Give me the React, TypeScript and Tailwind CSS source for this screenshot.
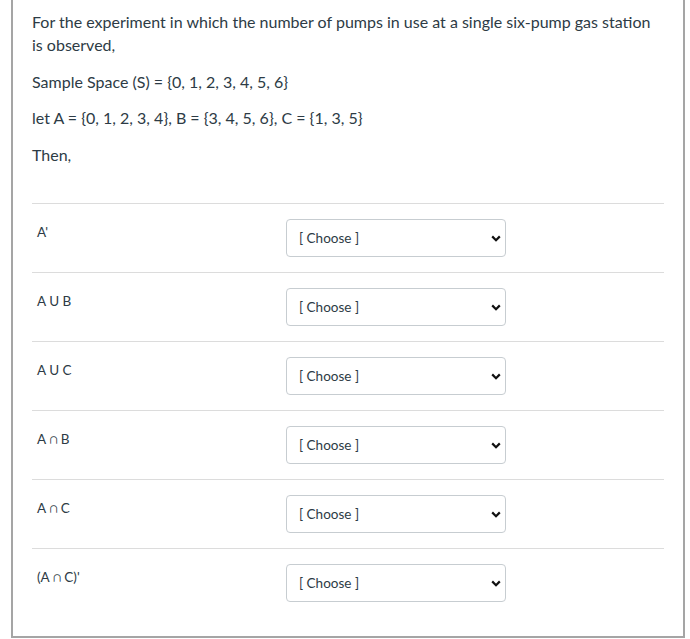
const rows = ["A'", "A U B", "A U C", "A ∩ B", "A ∩ C", "(A ∩ C)'"];

export default function App() {
  return (
    <div className="bg-white w-[690px] h-[639px] font-['Lato','Liberation_Sans',sans-serif] text-[#2d3b45]">
      <div className="ml-[11px] w-[674px] h-[638px] border-x-2 border-b-2 border-[#a5a5a5] pt-[10px] px-[19px]">
        <p className="text-[16px] leading-[23px]">
          For the experiment in which the number of pumps in use at a single six-pump gas station is observed,
        </p>
        <p className="mt-[14px] text-[16px] leading-[23px]">Sample Space (S) = {"{"}0, 1, 2, 3, 4, 5, 6{"}"}</p>
        <p className="mt-[13px] text-[16px] leading-[23px]">let A = {"{"}0, 1, 2, 3, 4{"}"}, B = {"{"}3, 4, 5, 6{"}"}, C = {"{"}1, 3, 5{"}"}</p>
        <p className="mt-[14px] text-[16px] leading-[23px]">Then,</p>

        <div className="mt-[37px]">
          {rows.map((r) => (
            <div key={r} className="border-t border-[#dcdcdc] h-[69px] flex">
              <div className="w-[254px] pl-[5px] pt-[20px] text-[13.5px] leading-[16px]">{r}</div>
              <div className="pt-[15px]">
                <div className="relative w-[220px]">
                  <select className="appearance-none w-[220px] h-[38px] border border-[#c7cdd1] rounded-[4px] pl-[12px] pr-[24px] text-[13.5px] text-[#2d3b45] bg-white">
                    <option>[ Choose ]</option>
                  </select>
                  <svg className="absolute right-[5px] top-[16px] pointer-events-none" width="10" height="7" viewBox="0 0 10 7">
                    <path d="M1.2 1.4 L5 5.2 L8.8 1.4" fill="none" stroke="#111" strokeWidth="2.2" />
                  </svg>
                </div>
              </div>
            </div>
          ))}
        </div>
      </div>
    </div>
  );
}
